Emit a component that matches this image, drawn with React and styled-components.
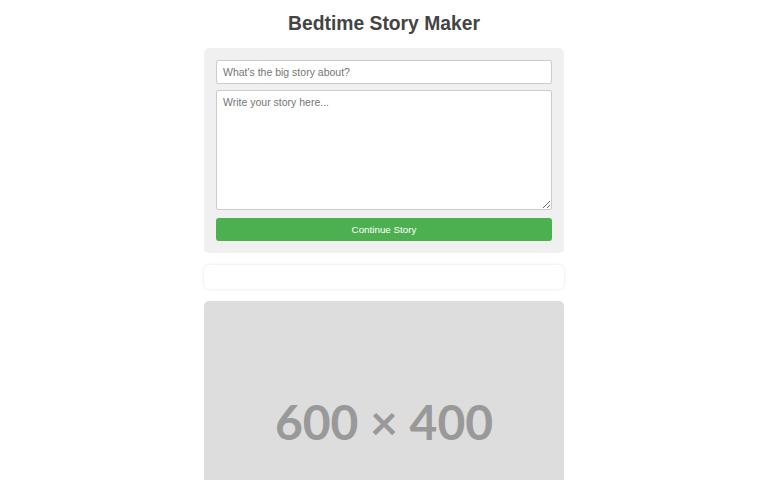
import React from 'react'
import styled, { createGlobalStyle } from 'styled-components'

const GlobalStyle = createGlobalStyle`
  body {
    margin: 0;
    background: #ffffff;
    font-family: "Liberation Sans", Arial, sans-serif;
  }
`;

const Page = styled.div`
  width: 360px;
  margin: 0 auto;
  display: flex;
  flex-direction: column;
  gap: 12px;
`;

const Title = styled.h1`
  margin: 12px 0 0;
  text-align: center;
  font-size: 19.3px;
  line-height: 24px;
  font-weight: 700;
  color: #444444;
`;

const Panel = styled.div`
  background: #f0f0f0;
  border-radius: 5px;
  padding: 12px;
  display: flex;
  flex-direction: column;
`;

const TopicInput = styled.input`
  box-sizing: border-box;
  width: 100%;
  height: 24px;
  padding: 0 6px;
  border: 1px solid #cccccc;
  border-radius: 2px;
  font-family: "Liberation Sans", Arial, sans-serif;
  font-size: 10.5px;
  color: #333;
  background: #fff;
  &::placeholder { color: #757575; }
`;

const StoryArea = styled.textarea`
  box-sizing: border-box;
  width: 100%;
  height: 120px;
  margin-top: 6px;
  padding: 5px 6px;
  border: 1px solid #cccccc;
  border-radius: 2px;
  font-family: "Liberation Sans", Arial, sans-serif;
  font-size: 10.5px;
  color: #333;
  background: #fff;
  resize: vertical;
  &::placeholder { color: #757575; }
`;

const Button = styled.button`
  margin-top: 8px;
  height: 23px;
  border: none;
  border-radius: 3px;
  background: #4caf50;
  color: #ffffff;
  font-family: "Liberation Sans", Arial, sans-serif;
  font-size: 9.8px;
  cursor: pointer;
`;

const Output = styled.div`
  height: 24px;
  background: #ffffff;
  border-radius: 5px;
  box-shadow: 0 0 3px rgba(0, 0, 0, 0.12);
`;

const Placeholder = styled.div`
  height: 240px;
  background: #dddddd;
  border-radius: 5px 5px 0 0;
  display: flex;
  align-items: center;
  justify-content: center;
  font-family: Lato, "Liberation Sans", sans-serif;
  font-size: 48px;
  font-weight: 700;
  color: #999999;
`;

export default function App() {
  return (
    <>
      <GlobalStyle />
      <Page>
        <Title>Bedtime Story Maker</Title>
        <Panel>
          <TopicInput placeholder="What's the big story about?" />
          <StoryArea placeholder="Write your story here..." />
          <Button>Continue Story</Button>
        </Panel>
        <Output />
        <Placeholder>600 × 400</Placeholder>
      </Page>
    </>
  )
}
